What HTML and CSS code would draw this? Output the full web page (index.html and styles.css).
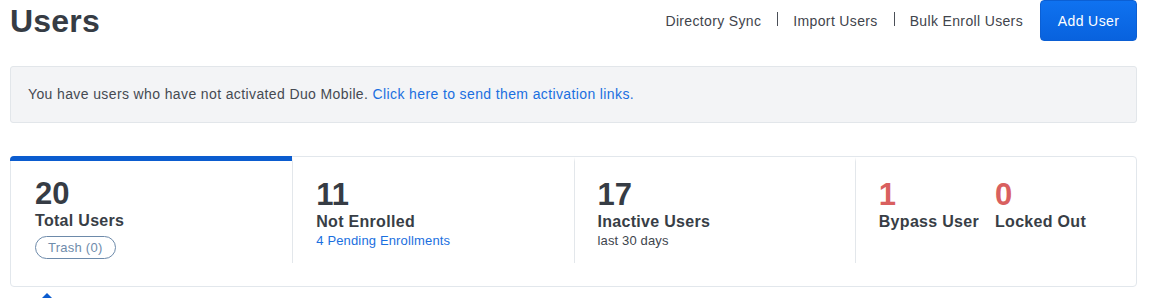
FILE: index.html
```html
<!DOCTYPE html>
<html>
<head>
<meta charset="utf-8">
<link rel="stylesheet" href="styles.css">
</head>
<body>
<div class="page">
  <header class="header">
    <h1 class="title">Users</h1>
    <nav class="actions">
      <a class="action">Directory Sync</a>
      <span class="sep"></span>
      <a class="action">Import Users</a>
      <span class="sep"></span>
      <a class="action">Bulk Enroll Users</a>
      <button class="btn">Add User</button>
    </nav>
  </header>

  <div class="banner">
    You have users who have not activated Duo Mobile. <a class="link">Click here to send them activation links.</a>
  </div>

  <div class="stats">
    <div class="stat active">
      <div class="num">20</div>
      <div class="label">Total Users</div>
      <span class="pill">Trash (0)</span>
    </div>
    <div class="stat">
      <div class="num">11</div>
      <div class="label">Not Enrolled</div>
      <a class="sub link">4 Pending Enrollments</a>
    </div>
    <div class="stat">
      <div class="num">17</div>
      <div class="label">Inactive Users</div>
      <div class="sub">last 30 days</div>
    </div>
    <div class="stat split">
      <div class="mini">
        <div class="num red">1</div>
        <div class="label">Bypass User</div>
      </div>
      <div class="mini">
        <div class="num red">0</div>
        <div class="label">Locked Out</div>
      </div>
    </div>
  </div>
  <div class="caret-row"><span class="caret"></span></div>
</div>
</body>
</html>
```

FILE: styles.css
```css
* { box-sizing: border-box; }
html, body { margin: 0; padding: 0; background: #fff; }
body {
  font-family: "Liberation Sans", Arial, sans-serif;
  color: #3a3f47;
  overflow: hidden;
}
.page { padding: 0 14px 0 10px; }
.header {
  display: flex;
  justify-content: space-between;
  align-items: flex-start;
  height: 66px;
}
.title {
  margin: 0;
  font-size: 32px;
  font-weight: bold;
  line-height: 42px;
  color: #363c44;
  letter-spacing: 0.2px;
}
.actions {
  display: flex;
  align-items: center;
  height: 41px;
}
.action {
  font-size: 14px;
  letter-spacing: 0.35px;
  color: #3f444c;
}
.sep {
  width: 1px;
  height: 14px;
  background: #4a4f57;
  margin: -4px 15px 0 16px;
}
.btn {
  margin-left: 17px;
  width: 97px;
  height: 41px;
  border: 1px solid #0b5fd4;
  border-radius: 4px;
  background: linear-gradient(#0f72f0, #0862de);
  color: #fff;
  font-family: "Liberation Sans", Arial, sans-serif;
  font-size: 14px;
  letter-spacing: 0.4px;
  padding: 0;
}
.banner {
  height: 57px;
  background: #f3f4f6;
  border: 1px solid #e2e6ea;
  border-radius: 3px;
  padding: 19px 17px 0;
  font-size: 14px;
  letter-spacing: 0.38px;
  color: #454a52;
}
.link { color: #1a6fe0; }
.stats {
  margin-top: 33px;
  border: 1px solid #e2e7ec;
  border-radius: 4px;
  display: grid;
  grid-template-columns: repeat(4, 1fr);
  padding-bottom: 24px;
  height: 131px;
}
.stat {
  border-top: 5px solid transparent;
  border-left: 1px solid #e3e7eb;
  padding: 16px 24px 0 23px;
  height: 106px;
}
.stat:first-child { border-left: none; }
.stat.active { border-top-color: #0b5ccf; margin-top: -1px; margin-left: -1px; padding-left: 25px; border-top-left-radius: 4px; }
.num {
  font-size: 31px;
  font-weight: bold;
  line-height: 34px;
  color: #363c44;
}
.num.red { color: #d9605f; }
.label {
  font-size: 16px;
  font-weight: bold;
  line-height: 20px;
  color: #383e46;
  letter-spacing: 0.3px;
}
.sub {
  display: block;
  font-size: 13px;
  line-height: 18px;
  color: #40454d;
  letter-spacing: 0.15px;
}
a.sub { color: #1a6fe0; }
.pill {
  display: inline-block;
  margin-top: 5px;
  height: 23px;
  padding: 0 12px;
  border: 1px solid #6d8aaa;
  border-radius: 12px;
  font-size: 13px;
  line-height: 21px;
  color: #6f8cab;
  letter-spacing: 0.25px;
}
.split { display: flex; gap: 16px; }
.caret-row { height: 12px; padding-left: 31px; padding-top: 6px; }
.caret {
  display: block;
  width: 0; height: 0;
  border-left: 6px solid transparent;
  border-right: 6px solid transparent;
  border-bottom: 6px solid #0b5ccf;
}
```
